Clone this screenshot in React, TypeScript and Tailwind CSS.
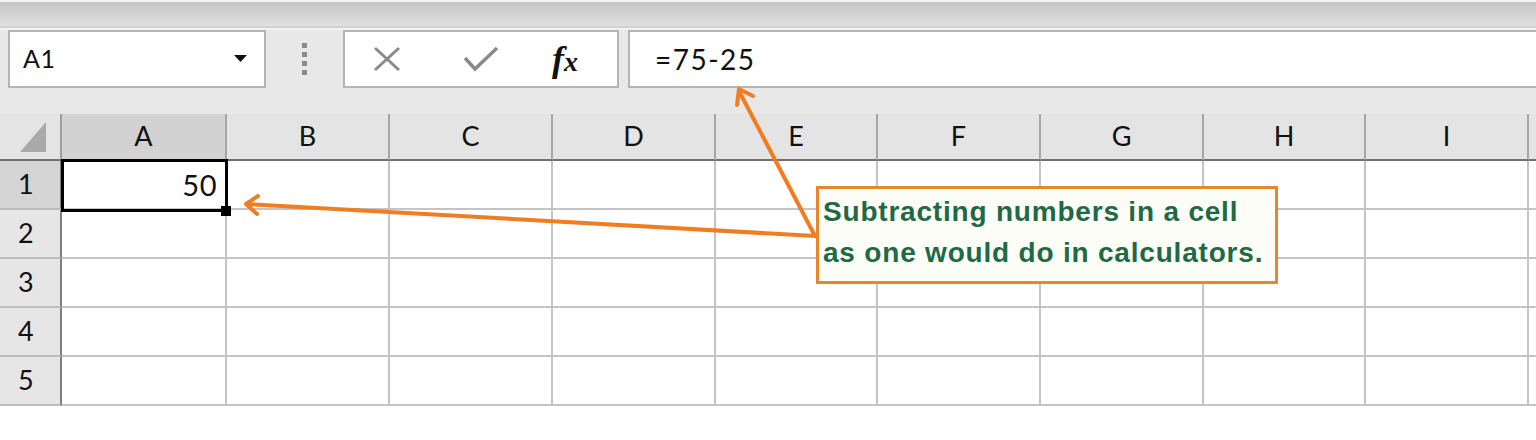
import React from 'react';

const columns = ['A', 'B', 'C', 'D', 'E', 'F', 'G', 'H', 'I', ''];
const rows = [1, 2, 3, 4, 5];

export default function App() {
  return (
    <div className="relative w-[1536px] h-[440px] overflow-hidden bg-white font-['Lato','Open_Sans',sans-serif] text-[#111]">
      {/* top ribbon edge */}
      <div className="h-[30px] bg-[#f2f2f2] pt-[2px]">
        <div className="h-[26px] bg-gradient-to-b from-[#c4c4c4] to-[#e0e0e0] border-b-2 border-[#d2d2d2]" />
      </div>

      {/* name box + formula bar */}
      <div className="h-[84px] bg-[#e8e8e8]">
        <div className="flex items-start h-[58px]">
          <div className="ml-[8px] w-[258px] h-[58px] bg-white border-2 border-[#b4b4b4] flex items-center justify-between pl-[13px] pr-[17px]">
            <span className="text-[25px] tracking-[0.5px]">A1</span>
            <svg width="13" height="8" viewBox="0 0 13 8">
              <path d="M0 0 L13 0 L6.5 7 Z" fill="#111" />
            </svg>
          </div>
          <div className="w-[77px] h-[58px] flex flex-col items-center justify-center gap-[4px]">
            <span className="w-[5px] h-[5px] bg-[#8a8a8a]" />
            <span className="w-[5px] h-[5px] bg-[#8a8a8a]" />
            <span className="w-[5px] h-[5px] bg-[#8a8a8a]" />
            <span className="w-[5px] h-[5px] bg-[#8a8a8a]" />
          </div>
          <div className="w-[276px] h-[58px] bg-white border-2 border-[#b4b4b4] flex items-center">
            <svg className="ml-[28px]" width="28" height="26" viewBox="0 0 28 26">
              <path d="M2 2 L26 24 M26 2 L2 24" stroke="#8a8a8a" strokeWidth="3" fill="none" />
            </svg>
            <svg className="ml-[62px]" width="36" height="26" viewBox="0 0 36 26">
              <path d="M2 12 L12 23 L34 2" stroke="#8a8a8a" strokeWidth="3.5" fill="none" />
            </svg>
            <span className="ml-[53px] font-['Liberation_Serif',serif] italic font-bold text-[36px] leading-none">
              f<span className="text-[28px]">x</span>
            </span>
          </div>
          <div className="ml-[9px] flex-1 h-[58px] bg-white border-2 border-r-0 border-[#b4b4b4] flex items-center pl-[25px]">
            <span className="text-[28px] tracking-[1.5px]">=75-25</span>
          </div>
        </div>
      </div>

      {/* sheet grid */}
      <div className="grid grid-cols-[62px_165px_163px_163px_163px_162px_163px_163px_162px_163px_1fr]">
        <div className="h-[47px] bg-[#e4e4e4] border-r-2 border-b-2 border-r-[#a0a0a0] border-b-[#6f6f6f] flex items-end justify-end pr-[14px] pb-[7px]">
          <svg width="26" height="30" viewBox="0 0 26 30">
            <path d="M26 0 L26 30 L0 30 Z" fill="#a9a9a9" />
          </svg>
        </div>
        {columns.map((c, i) => (
          <div
            key={'h' + i}
            className={`h-[47px] border-r-2 border-b-2 border-r-[#a6a6a6] border-b-[#6f6f6f] flex items-center justify-center text-[27px] ${
              c === 'A' ? 'bg-[#d2d2d2]' : 'bg-[#e4e4e4]'
            }`}
          >
            {c}
          </div>
        ))}

        {rows.map((r) => (
          <React.Fragment key={r}>
            <div
              className={`h-[49px] border-r-2 border-b-2 border-r-[#7e7e7e] border-b-[#bcbcbc] flex items-center pl-[18px] text-[27px] ${
                r === 1 ? 'bg-[#d4d4d4]' : 'bg-[#e6e6e6]'
              }`}
            >
              {r}
            </div>
            {columns.map((c, i) => (
              <div
                key={r + '-' + i}
                className={`relative h-[49px] border-r-2 border-b-2 border-[#c4c4c4] flex items-center justify-end pr-[8px] ${
                  r === 1 && c === 'A' ? 'z-10' : ''
                }`}
              >
                {r === 1 && c === 'A' && (
                  <>
                    <span className="text-[29px] tracking-[0.5px]">50</span>
                    <div className="absolute -left-[1px] -top-[2px] w-[167px] h-[53px] border-[3px] border-black" />
                    <div className="absolute left-[159px] top-[45px] w-[10px] h-[10px] bg-black" />
                  </>
                )}
              </div>
            ))}
          </React.Fragment>
        ))}
      </div>

      {/* annotation arrows */}
      <svg className="absolute inset-0 z-20 pointer-events-none" width="1536" height="440">
        <g stroke="#ef7d22" strokeWidth="4" fill="none" strokeLinecap="round" strokeLinejoin="round">
          <path d="M815 236 L247 204" />
          <path d="M258 196 L246 204 L257 214" />
          <path d="M815 236 L739 91" />
          <path d="M737 105 L739 89 L753 96" />
        </g>
      </svg>

      {/* callout */}
      <div className="absolute z-30 left-[816px] top-[186px] w-[462px] h-[98px] border-[3px] border-[#e8862e] bg-[#fdfdf8] pl-[4px] pt-[2px]">
        <p className="font-['Liberation_Sans',Arial,sans-serif] font-bold text-[28px] tracking-[0.8px] leading-[41px] text-[#1f6a45]">
          Subtracting numbers in a cell
          <br />
          as one would do in calculators.
        </p>
      </div>
    </div>
  );
}
